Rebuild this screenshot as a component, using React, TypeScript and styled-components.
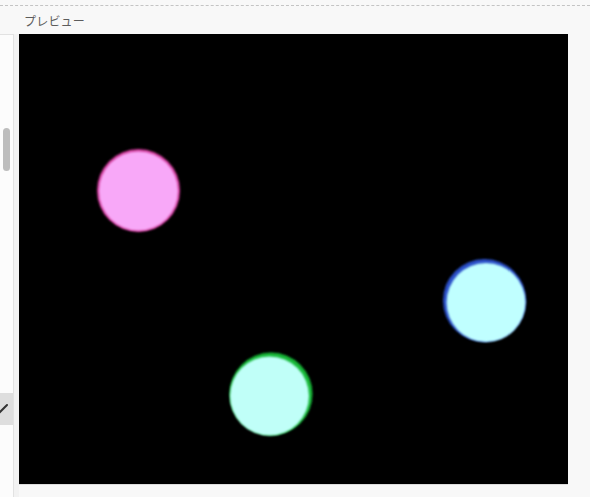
import { createGlobalStyle } from 'styled-components';
import styled from 'styled-components';

const GlobalStyle = createGlobalStyle`
	html, body {
		margin: 0;
		padding: 0;
		background: #f8f8f8;
		font-family: 'Noto Sans CJK JP', 'Noto Sans', sans-serif;
		overflow: hidden;
	}
`;

const Page = styled.div`
	width: 590px;
	height: 497px;
	padding-top: 5px;
	box-sizing: border-box;
	display: flex;
	flex-direction: column;
`;

const Panel = styled.section`
	flex: 1;
	display: flex;
	flex-direction: column;
	border-top: 1px dashed #c4c4c4;
`;

const Title = styled.h2`
	margin: 0;
	height: 28px;
	padding-left: 24px;
	display: flex;
	align-items: center;
	font-size: 12px;
	font-weight: 400;
	color: #5c5c5c;
	letter-spacing: 0.2px;
`;

const Body = styled.div`
	flex: 1;
	display: flex;
	min-height: 0;
`;

const Sidebar = styled.aside`
	width: 13px;
	flex-shrink: 0;
	background: #fcfcfc;
	border-top: 1px solid #e2e2e2;
	border-right: 1px solid #e2e2e2;
	display: flex;
	flex-direction: column;
	position: relative;
	overflow: hidden;
`;

const Thumb = styled.div`
	position: absolute;
	left: 3px;
	top: 93px;
	width: 7px;
	height: 43px;
	border-radius: 4px;
	background: #bdbdbd;
`;

const ToolButton = styled.div`
	margin-top: 358px;
	height: 32px;
	background: #dedede;
	display: flex;
	align-items: center;
	justify-content: flex-end;
	overflow: hidden;
`;

const CheckIcon = styled.svg`
	flex-shrink: 0;
	margin-right: 4px;
`;

const Gutter = styled.div`
	width: 5px;
	flex-shrink: 0;
	background: #f2f2f2;
`;

const Stage = styled.div`
	width: 549px;
	height: 450px;
	background: #000;
	border-bottom: 1px solid #ddd;
	flex-shrink: 0;
`;

type Ball = { cx: number; cy: number; fill: string; ring: string; dx: number; dy: number };

const balls: Ball[] = [
	{ cx: 119.5, cy: 156.5, fill: '#f8a8f8', ring: '#d03c9c', dx: 0, dy: 0.5 },
	{ cx: 465.5, cy: 266.5, fill: '#c0ffff', ring: '#2c50c8', dx: 1.5, dy: 2 },
	{ cx: 252, cy: 360, fill: '#c0fff8', ring: '#18b838', dx: -1.5, dy: 2 },
];

const App = () => {
	return (
		<>
			<GlobalStyle />
			<Page>
				<Panel>
					<Title>プレビュー</Title>
					<Body>
						<Sidebar>
							<Thumb />
							<ToolButton>
								<CheckIcon width="16" height="16" viewBox="0 0 16 16">
									<path d="M2 8.5 L6 12 L14 4" fill="none" stroke="#333" strokeWidth="2" strokeLinecap="round" />
								</CheckIcon>
							</ToolButton>
						</Sidebar>
						<Gutter />
						<Stage>
							<svg width="549" height="450" viewBox="0 0 549 450">
								<defs>
									<filter id="soft" x="-30%" y="-30%" width="160%" height="160%">
										<feGaussianBlur stdDeviation="1" />
									</filter>
									<filter id="edge" x="-30%" y="-30%" width="160%" height="160%">
										<feGaussianBlur stdDeviation="0.9" />
									</filter>
								</defs>
								{balls.map((b, i) => (
									<g key={i}>
										<circle cx={b.cx} cy={b.cy} r={41.5} fill={b.ring} filter="url(#soft)" />
										<circle
											cx={b.cx + b.dx}
											cy={b.cy + b.dy}
											r={39.5}
											fill={b.fill}
											filter="url(#edge)"
										/>
									</g>
								))}
							</svg>
						</Stage>
					</Body>
				</Panel>
			</Page>
		</>
	);
};

export default App;
